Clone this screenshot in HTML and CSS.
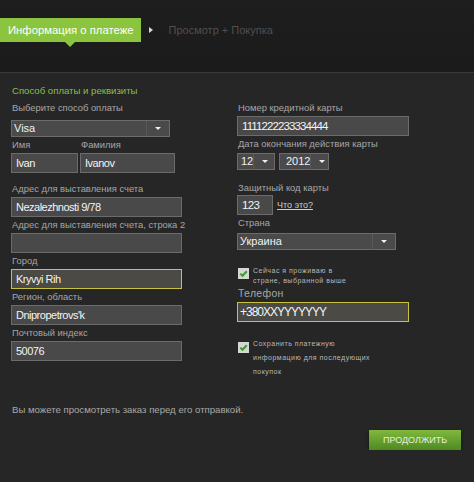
FILE: index.html
```html
<!DOCTYPE html>
<html>
<head>
    <title>Информация о платеже</title>
    <link rel="stylesheet" href="styles.css">
</head>

<body>

    <!-- Шаги оформления -->
    <div class="header">
        <div class="steps">
            <span class="step-active">Информация о платеже</span>
            <span class="step-arrow"></span>
            <span class="step">Просмотр + Покупка</span>
        </div>
    </div>

    <div class="form">
        <div class="col-left">
            <p class="section-title">Способ оплаты и реквизиты</p>

            <label>Выберите способ оплаты</label>
            <div class="select select-visa">
                <span class="select-value">Visa</span>
                <span class="select-arrow"></span>
            </div>

            <div class="name-row">
                <div>
                    <label>Имя</label>
                    <input class="input input-first" value="Ivan" readonly>
                </div>
                <div>
                    <label>Фамилия</label>
                    <input class="input input-last" value="Ivanov" readonly>
                </div>
            </div>

            <div class="field field-gap">
                <label>Адрес для выставления счета</label>
                <input class="input input-wide" value="Nezalezhnosti 9/78" readonly>
            </div>
            <div class="field">
                <label>Адрес для выставления счета, строка 2</label>
                <input class="input input-wide" value="" readonly>
            </div>
            <div class="field">
                <label>Город</label>
                <input class="input input-wide input-focus" value="Kryvyi Rih" readonly>
            </div>
            <div class="field">
                <label>Регион, область</label>
                <input class="input input-wide" value="Dnipropetrovs'k" readonly>
            </div>
            <div class="field">
                <label>Почтовый индекс</label>
                <input class="input input-wide" value="50076" readonly>
            </div>
        </div>

        <div class="col-right">
            <label>Номер кредитной карты</label>
            <input class="input input-card input-digits" value="1111222233334444" readonly>

            <label>Дата окончания действия карты</label>
            <div class="date-row">
                <div class="select select-month">
                    <span class="select-value">12</span>
                    <span class="select-arrow"></span>
                </div>
                <div class="select select-year">
                    <span class="select-value">2012</span>
                    <span class="select-arrow"></span>
                </div>
            </div>

            <label class="label-gap">Защитный код карты</label>
            <div class="cvv-row">
                <input class="input input-cvv" value="123" readonly>
                <a href="#" class="cvv-link">Что это?</a>
            </div>

            <label>Страна</label>
            <div class="select select-country">
                <span class="select-value">Украина</span>
                <span class="select-arrow"></span>
            </div>

            <div class="check-row check-live">
                <svg class="checkbox" width="11" height="11" viewBox="0 0 11 11">
                    <rect width="11" height="11" fill="#d6d6d6"/>
                    <path d="M2.3 5.6 L4.5 7.8 L8.8 3.2" fill="none" stroke="#3f9b2c" stroke-width="2"/>
                </svg>
                <span class="check-text">Сейчас я проживаю в<br>стране, выбранной выше</span>
            </div>

            <label class="label-phone">Телефон</label>
            <input class="input input-card input-focus input-phone" value="+380XXYYYYYYY" readonly>

            <div class="check-row check-save">
                <svg class="checkbox" width="11" height="11" viewBox="0 0 11 11">
                    <rect width="11" height="11" fill="#d6d6d6"/>
                    <path d="M2.3 5.6 L4.5 7.8 L8.8 3.2" fill="none" stroke="#3f9b2c" stroke-width="2"/>
                </svg>
                <span class="check-text">Сохранить платежную<br>информацию для последующих<br>покупок</span>
            </div>
        </div>
    </div>

    <p class="note">Вы можете просмотреть заказ перед его отправкой.</p>

    <div class="actions">
        <button class="continue-button">ПРОДОЛЖИТЬ</button>
    </div>

</body>
</html>
```

FILE: styles.css
```css
body {
    background-color: #262626;
    font-family: "Liberation Sans", Arial, sans-serif;
    margin: 0;
    padding: 0;
}

/* Верхняя полоса с шагами */
.header {
    height: 72px;
    background: linear-gradient(#1e1e1e, #1b1b1b);
    border-bottom: 1px solid #3a3a3a;
}

.steps {
    display: flex;
    align-items: center;
    padding-top: 18px;
}

.step-active {
    position: relative;
    height: 24px;
    line-height: 24px;
    padding: 0 7px 0 8px;
    background-color: #8bc43f;
    color: #ffffff;
    font-size: 11.3px;
}

.step-active::after {
    content: "";
    position: absolute;
    left: 50%;
    bottom: -5px;
    margin-left: -5px;
    border-left: 5px solid transparent;
    border-right: 5px solid transparent;
    border-top: 5px solid #8bc43f;
}

.step-arrow {
    margin-left: 8px;
    width: 0;
    height: 0;
    border-top: 3px solid transparent;
    border-bottom: 3px solid transparent;
    border-left: 4px solid #d8d8d8;
}

.step {
    margin-left: 16px;
    color: #4f4f4f;
    font-size: 11px;
}

/* Форма */
.form {
    display: flex;
    padding: 11px 0 0 11px;
}

.col-left {
    width: 226px;
}

.col-right {
    padding-top: 16px;
}

.section-title {
    margin: 0 0 2px 1px;
    line-height: 14px;
    font-size: 9.6px;
    color: #8cbf4b;
}

label {
    display: block;
    line-height: 15px;
    padding-left: 1px;
    font-size: 9.4px;
    color: #a6a6a6;
}

.input {
    display: block;
    box-sizing: border-box;
    height: 20px;
    margin: 1px 0 0 0;
    padding: 0 4px;
    border: 1px solid #6b6b6b;
    background-color: #494949;
    color: #f4f4f4;
    font-family: "Liberation Sans", Arial, sans-serif;
    font-size: 11px;
    letter-spacing: -0.5px;
    outline: none;
}

.input-focus {
    border-color: #c9c23c;
    background-color: #4b4a44;
}

.input-first {
    width: 67px;
}

.input-last {
    width: 95px;
}

.input-wide {
    width: 171px;
}

.input-card {
    width: 172px;
}

.input-digits {
    font-size: 11.5px;
    letter-spacing: -0.9px;
}

.input-cvv {
    width: 36px;
    margin: 0;
    font-size: 11.5px;
    letter-spacing: -0.6px;
}

.name-row {
    display: flex;
    gap: 2px;
}

.field-gap {
    margin-top: 8px;
}

/* Выпадающие списки */
.select {
    display: flex;
    box-sizing: border-box;
    height: 17px;
    border: 1px solid #6b6b6b;
    background-color: #4a4a4a;
    color: #f2f2f2;
    font-size: 11px;
}

.select-value {
    flex: 1;
    line-height: 15px;
    padding-left: 2px;
}

.select-arrow {
    position: relative;
    width: 22px;
    border-left: 1px solid #585858;
}

.select-arrow::after {
    content: "";
    position: absolute;
    left: 8px;
    top: 6px;
    border-left: 3px solid transparent;
    border-right: 3px solid transparent;
    border-top: 3px solid #f0f0f0;
}

.select-visa {
    width: 159px;
    margin-top: 5px;
}

.date-row {
    display: flex;
    gap: 4px;
    margin-top: 2px;
}

.select-month {
    width: 38px;
}

.select-month .select-value {
    padding-left: 3px;
}

.select-year {
    width: 50px;
}

.select-year .select-value {
    padding-left: 6px;
}

.select-country {
    width: 159px;
    margin-top: 3px;
}

.label-gap {
    margin-top: 10px;
}

.cvv-row {
    display: flex;
    align-items: center;
}

.cvv-link {
    margin-left: 4px;
    color: #cfcfcf;
    font-size: 9px;
}

/* Чекбоксы */
.check-row {
    display: flex;
    align-items: flex-start;
}

.checkbox {
    flex: none;
    margin: 2px 4px 0 1px;
}

.check-text {
    font-size: 7px;
    letter-spacing: 0.5px;
    color: #b8b8b8;
}

.check-live {
    margin-top: 16px;
}

.check-live .check-text {
    line-height: 10px;
}

.label-phone {
    line-height: 15px;
    font-size: 10.5px;
    letter-spacing: 0.3px;
}

.input-phone {
    font-size: 12px;
    letter-spacing: -1px;
    padding-left: 2px;
}

.check-save {
    margin-top: 15px;
}

.check-save .checkbox {
    margin-top: 5px;
}

.check-save .check-text {
    line-height: 14px;
}

/* Низ страницы */
.note {
    margin: 24px 0 0 12px;
    line-height: 14px;
    font-size: 9.6px;
    color: #a8a8a8;
}

.actions {
    display: flex;
    justify-content: flex-end;
    padding-right: 13px;
    margin-top: 13px;
}

.continue-button {
    width: 92px;
    height: 20px;
    border: none;
    background: linear-gradient(#80b83e, #4d8a20);
    box-shadow: 0 2px 3px rgba(0, 0, 0, 0.6);
    color: #e6f0dc;
    font-family: "Liberation Sans", Arial, sans-serif;
    font-size: 9px;
    cursor: pointer;
}
```
